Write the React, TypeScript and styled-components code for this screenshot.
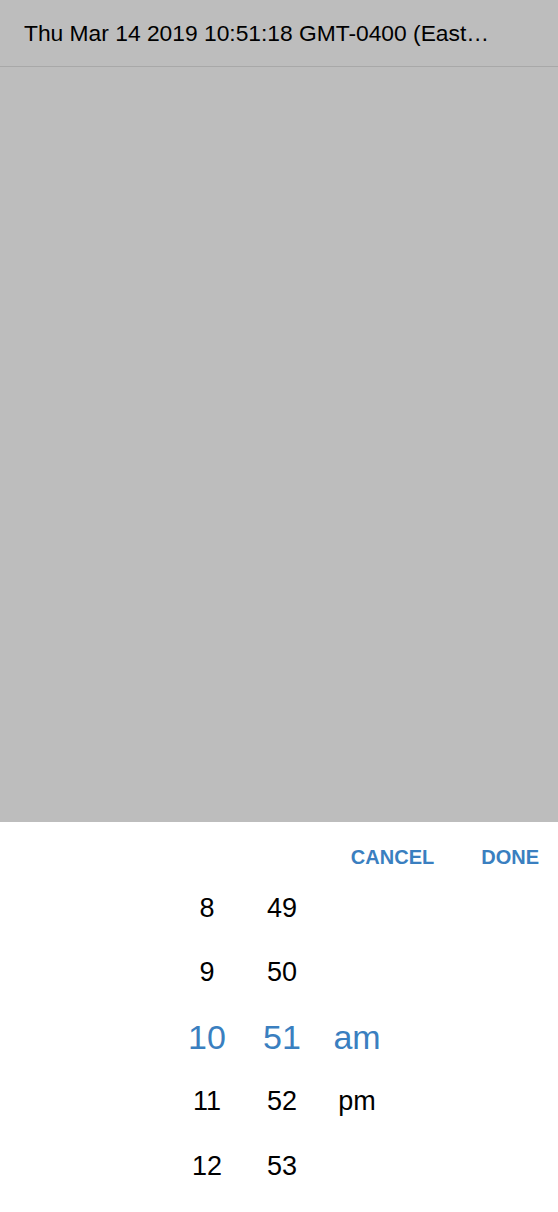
import * as React from 'react';
import styled, { createGlobalStyle } from 'styled-components';

const colors = {
  backdrop: '#bdbdbd',
  rule: '#a8a8a8',
  sheet: '#ffffff',
  accent: '#3a7fc0',
  text: '#000000',
};

const GlobalStyle = createGlobalStyle`
  html, body {
    margin: 0;
    padding: 0;
    background: ${colors.backdrop};
  }
  body {
    font-family: "Liberation Sans", Arial, sans-serif;
  }
`;

const Screen = styled.div`
  width: 558px;
  height: 1212px;
  display: flex;
  flex-direction: column;
  background: ${colors.backdrop};
  overflow: hidden;
`;

const DateBar = styled.div`
  height: 66px;
  border-bottom: 1px solid ${colors.rule};
  display: flex;
  align-items: center;
  padding: 0 58px 0 24px;
`;

const DateText = styled.div`
  font-size: 22.8px;
  color: ${colors.text};
  white-space: nowrap;
  overflow: hidden;
  text-overflow: ellipsis;
  min-width: 0;
`;

const Backdrop = styled.div`
  flex: 1;
`;

const Sheet = styled.div`
  height: 390px;
  background: ${colors.sheet};
  display: flex;
  flex-direction: column;
`;

const Toolbar = styled.div`
  display: flex;
  justify-content: flex-end;
  align-items: center;
  gap: 47px;
  padding: 24px 19px 8px 0;
  height: 22px;
`;

const ToolButton = styled.button`
  border: 0;
  background: none;
  padding: 0;
  font-family: inherit;
  font-size: 20px;
  font-weight: 600;
  color: ${colors.accent};
  line-height: 22px;
`;

const Wheels = styled.div`
  display: flex;
  justify-content: center;
  padding-left: 6px;
`;

const Wheel = styled.div`
  width: 75px;
  display: flex;
  flex-direction: column;
`;

interface CellProps {
  $selected?: boolean;
}
const Cell = styled.div<CellProps>`
  height: 64.5px;
  display: flex;
  align-items: center;
  justify-content: center;
  font-size: ${(p) => (p.$selected ? '34px' : '27px')};
  color: ${(p) => (p.$selected ? colors.accent : colors.text)};
`;

const columns: string[][] = [
  ['8', '9', '10', '11', '12'],
  ['49', '50', '51', '52', '53'],
  ['', '', 'am', 'pm', ''],
];

const SELECTED = 2;

export default function App() {
  return (
    <Screen>
      <GlobalStyle />
      <DateBar>
        <DateText>Thu Mar 14 2019 10:51:18 GMT-0400 (Eastern Daylight Time)</DateText>
      </DateBar>
      <Backdrop />
      <Sheet>
        <Toolbar>
          <ToolButton>CANCEL</ToolButton>
          <ToolButton>DONE</ToolButton>
        </Toolbar>
        <Wheels>
          {columns.map((col, ci) => (
            <Wheel key={ci}>
              {col.map((v, ri) => (
                <Cell key={ri} $selected={ri === SELECTED}>
                  {v}
                </Cell>
              ))}
            </Wheel>
          ))}
        </Wheels>
      </Sheet>
    </Screen>
  );
}
